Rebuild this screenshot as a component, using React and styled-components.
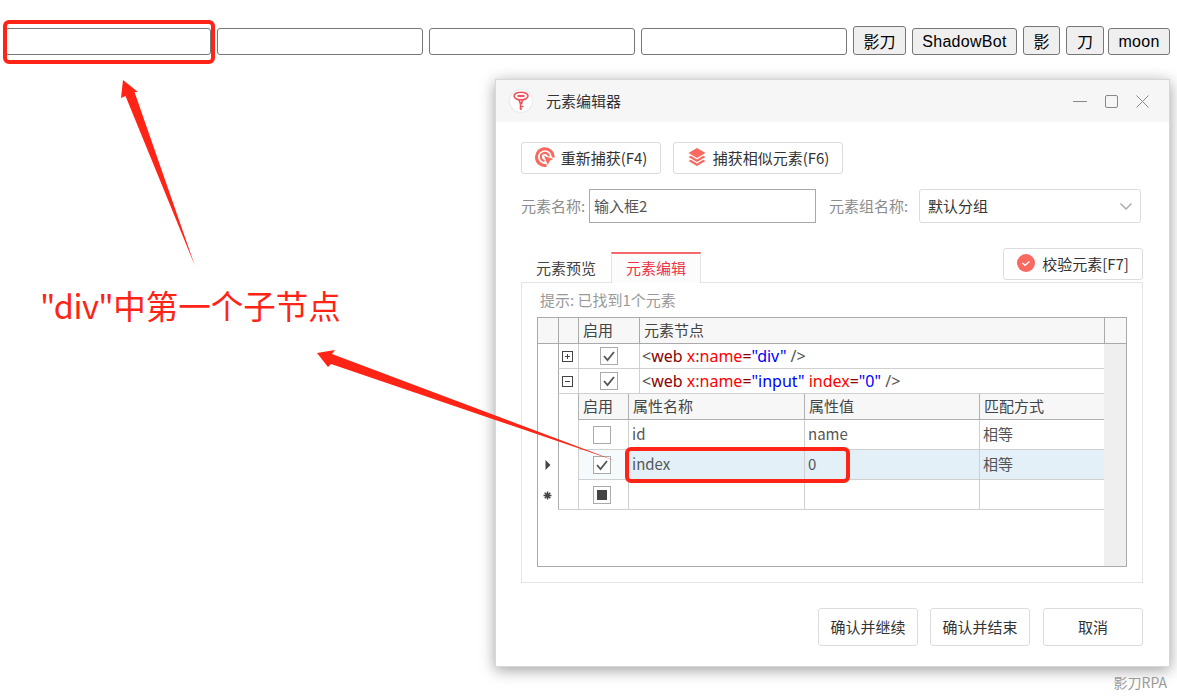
import React from 'react';
import styled, { createGlobalStyle } from 'styled-components';

const CJK = `"Noto Sans CJK SC", "Noto Sans", sans-serif`;
const RED = '#ff2416';
const CORAL = '#f8695f';

const Global = createGlobalStyle`
  * { box-sizing: border-box; }
  html, body { margin: 0; background: #fff; }
  body { font-family: ${CJK}; }
`;

const Page = styled.div`
  position: relative;
  width: 1177px;
  height: 699px;
  overflow: hidden;
`;

const Toolbar = styled.div`
  display: flex;
  align-items: flex-end;
  gap: 6px;
  height: 55px;
  padding-left: 5px;
`;

const NativeInput = styled.input`
  width: 206px;
  height: 27px;
  padding: 0;
  border: 1px solid #767676;
  border-radius: 3px;
  background: #fff;
`;

const NativeButton = styled.button`
  width: ${(p) => p.$w}px;
  height: ${(p) => (p.$tall ? 29 : 27)}px;
  padding: 0;
  margin-left: ${(p) => p.$shift || 0}px;
  border: 1px solid #767676;
  border-radius: 3px;
  background: #efefef;
  color: #000;
  font: 16px "Liberation Sans", ${CJK};
  letter-spacing: ${(p) => (p.$tall ? 0 : 0.3)}px;
`;

const Dialog = styled.div`
  position: absolute;
  left: 495px;
  top: 79px;
  width: 675px;
  height: 588px;
  display: flex;
  flex-direction: column;
  background: #fff;
  border: 1px solid #d8d8d8;
  box-shadow: 0 3px 14px rgba(0, 0, 0, 0.38);
  font-size: 15px;
  color: #333;
`;

const TitleBar = styled.div`
  display: flex;
  align-items: center;
  height: 42px;
  padding: 0 20px 0 14px;
  background: #f6f6f6;
`;

const AppBadge = styled.div`
  display: flex;
  align-items: center;
  justify-content: center;
  width: 22px;
  height: 22px;
  border-radius: 50%;
  background: #fff;
  box-shadow: 0 0 2px rgba(0, 0, 0, 0.15);
`;

const Title = styled.div`
  margin-left: 14px;
  padding-bottom: 2px;
  flex: 1;
  color: #333;
`;

const WindowControls = styled.div`
  display: flex;
  align-items: center;
  gap: 18px;
`;

const Body = styled.div`
  display: flex;
  flex-direction: column;
  padding: 20px 26px 20px 25px;
  flex: 1;
`;

const Actions = styled.div`
  display: flex;
  gap: 12px;
`;

const OutlineButton = styled.button`
  display: flex;
  align-items: center;
  justify-content: center;
  gap: 6px;
  width: ${(p) => p.$w}px;
  height: ${(p) => p.$h || 32}px;
  padding: 0 0 2px;
  border: 1px solid #dcdcdc;
  border-radius: 3px;
  background: #fff;
  color: #333;
  font: 15px ${CJK};
`;

const VerifyButton = styled(OutlineButton)`
  align-self: flex-start;
  gap: 7px;
`;

const CancelButton = styled(OutlineButton)`
  margin-left: 1px;
`;

const FormRow = styled.div`
  display: flex;
  align-items: center;
  margin-top: 15px;
`;

const FieldLabel = styled.span`
  width: ${(p) => p.$w}px;
  margin-left: ${(p) => p.$gap || 0}px;
  padding-bottom: 2px;
  color: #8c8c8c;
  white-space: nowrap;
`;

const NameField = styled.div`
  display: flex;
  align-items: center;
  width: 227px;
  height: 34px;
  padding: 0 0 2px 4px;
  border: 1px solid #a9a9a9;
  color: #555;
`;

const SelectField = styled.div`
  display: flex;
  align-items: center;
  justify-content: space-between;
  width: 222px;
  height: 34px;
  padding: 0 7px 2px 8px;
  border: 1px solid #dcdcdc;
  border-radius: 3px;
  color: #333;
  svg { transform: translateY(1px); }
`;

const TabRow = styled.div`
  display: flex;
  align-items: flex-end;
  justify-content: space-between;
  height: 34px;
  margin-top: 25px;
`;

const Tabs = styled.div`
  display: flex;
  margin-bottom: -1px;
  position: relative;
  z-index: 1;
`;

const Tab = styled.div`
  display: flex;
  align-items: center;
  justify-content: center;
  width: 90px;
  height: 31px;
  padding-bottom: 2px;
  color: ${(p) => (p.$active ? '#ee3344' : '#444')};
  background: ${(p) => (p.$active ? '#fcfcfc' : 'transparent')};
  border: 1px solid ${(p) => (p.$active ? '#e2e2e2' : 'transparent')};
  border-bottom: none;
  border-top: 2px solid ${(p) => (p.$active ? '#f4696b' : 'transparent')};
`;

const Panel = styled.div`
  height: 301px;
  padding: 0 15px;
  border: 1px solid #e4e4e4;
`;

const Hint = styled.div`
  height: 34px;
  padding: 5px 0 0 3px;
  font-size: 15px;
  line-height: 24px;
  color: #999;
`;

const Grid = styled.div`
  width: 590px;
  height: 250px;
  display: flex;
  flex-direction: column;
  border: 1px solid #aaa;
  color: #555;
`;

const GridHead = styled.div`
  display: grid;
  grid-template-columns: 20px 20px 61px 465px 1fr;
  height: 26px;
  flex: none;
  background: #f7f7f7;
  border-bottom: 1px solid #aaa;
`;

const HeadCell = styled.div`
  display: flex;
  align-items: center;
  padding: 0 0 2px 4px;
  color: #444;
  font-size: 15px;
  border-left: ${(p) => (p.$first ? 'none' : '1px solid #aaa')};
`;

const GridBody = styled.div`
  display: flex;
  flex: 1;
`;

const Rows = styled.div`
  width: 566px;
`;

const ScrollTrack = styled.div`
  flex: 1;
  background: #efefef;
`;

const NodeRow = styled.div`
  display: grid;
  grid-template-columns: 20px 20px 61px 1fr;
  height: 25px;
`;

const NodeCell = styled.div`
  display: flex;
  align-items: center;
  justify-content: ${(p) => (p.$center ? 'center' : 'flex-start')};
  padding-left: ${(p) => p.$pad || 0}px;
  padding-right: ${(p) => (p.$line ? 3 : 0)}px;
  border-bottom: 1px solid #d0d0d0;
  border-left: 1px solid ${(p) => p.$line || '#d0d0d0'};
  white-space: nowrap;
`;

const Gutter = styled.div``;

const Xml = styled.span`
  font-family: "Noto Sans", ${CJK};
  font-size: 16px;
  color: #555;
`;

const Tok = styled.span`
  color: ${(p) => p.$c};
`;

const Detail = styled.div`
  display: flex;
`;

const Marks = styled.div`
  width: 20px;
  padding-top: 26px;
`;

const Mark = styled.div`
  display: flex;
  align-items: center;
  justify-content: center;
  height: 30px;
  padding-right: 1px;
`;

const Indent = styled.div`
  width: 20px;
  border-left: 1px solid #b0b0b0;
  border-bottom: 1px solid #d0d0d0;
`;

const SubTable = styled.div`
  flex: 1;
`;

const SubRow = styled.div`
  display: grid;
  grid-template-columns: 50px 176px 175px 1fr;
  height: ${(p) => (p.$head ? 26 : 30)}px;
`;

const SubCell = styled.div`
  display: flex;
  align-items: center;
  justify-content: ${(p) => (p.$center ? 'center' : 'flex-start')};
  padding-left: ${(p) => (p.$center ? 0 : p.$head ? 4 : 3)}px;
  padding-right: ${(p) => (p.$center ? 3 : 0)}px;
  padding-bottom: ${(p) => (p.$center ? 0 : 2)}px;
  font-size: 15px;
  color: ${(p) => (p.$head ? '#444' : '#555')};
  background: ${(p) => (p.$head ? '#f7f7f7' : p.$bg || '#fff')};
  border-left: 1px solid ${(p) => (p.$head ? '#b0b0b0' : '#d0d0d0')};
  border-bottom: 1px solid ${(p) => (p.$head ? '#b0b0b0' : '#d0d0d0')};
`;

const Check = styled.div`
  display: flex;
  align-items: center;
  justify-content: center;
  width: 18px;
  height: 18px;
  background: #fff;
  border: 1px solid #aaa;
`;

const FilledSquare = styled.div`
  width: 10px;
  height: 10px;
  background: #444;
`;

const Footer = styled.div`
  display: flex;
  justify-content: flex-end;
  gap: 12px;
  margin-top: 25px;
`;

const Overlay = styled.svg`
  position: absolute;
  left: 0;
  top: 0;
  pointer-events: none;
`;

const Callout = styled.div`
  position: absolute;
  left: 40px;
  top: 283px;
  font-size: 32.5px;
  line-height: 44px;
  color: ${RED};
  white-space: nowrap;
`;

const CalloutLatin = styled.span`
  letter-spacing: -0.5px;
`;

const Watermark = styled.div`
  position: absolute;
  right: 10px;
  top: 673px;
  font-size: 14px;
  line-height: 18px;
  color: #9a9a9a;
`;

const AppIcon = () => (
  <svg width="18" height="20" viewBox="0 0 18 20" fill="none" stroke="#f4505a" strokeWidth="1.6">
    <ellipse cx="9" cy="5" rx="7" ry="3.8" />
    <path d="M5.5 5h7" strokeWidth="2.2" />
    <path d="M7 8.5l1.5 4.5v5h1.5M10.5 8.5L9.5 13M9 15.500h2.500" />
  </svg>
);

const WinIcons = () => (
  <WindowControls>
    <svg width="14" height="14" viewBox="0 0 14 14" stroke="#888" fill="none"><path d="M0 7.500h14" /></svg>
    <svg width="13" height="13" viewBox="0 0 13 13" stroke="#888" fill="none"><rect x="0.5" y="0.500" width="12" height="12" rx="1.500" /></svg>
    <svg width="13" height="13" viewBox="0 0 13 13" stroke="#888" fill="none"><path d="M0.500 0.500l12 12M12.500 0.500l-12 12" /></svg>
  </WindowControls>
);

const RecaptureIcon = () => (
  <svg width="20" height="20" viewBox="0 0 20 20" fill="none" stroke={CORAL}>
    <path d="M11.500 18.300A8.400 8.400 0 1 1 18.300 10.500" strokeWidth="3" />
    <path d="M9.500 13.800A4 4 0 1 1 13.800 9.500" strokeWidth="2.200" />
    <path d="M8.300 8.300l11 3.600-4.300 2.200-2.200 4.900z" fill={CORAL} stroke="#fff" strokeWidth="0.800" />
  </svg>
);

const LayersIcon = () => (
  <svg width="20" height="20" viewBox="0 0 20 20" fill={CORAL}>
    <path d="M10 1l8.500 5L10 11 1.500 6z" />
    <path d="M3.800 8.800L1.500 10.100 10 15l8.500-4.900-2.300-1.300L10 12.400z" />
    <path d="M3.800 12.800L1.500 14.100 10 19l8.500-4.900-2.300-1.300L10 16.400z" />
  </svg>
);

const VerifyIcon = () => (
  <svg width="18" height="18" viewBox="0 0 18 18" fill="none">
    <circle cx="9" cy="9" r="9" fill={CORAL} />
    <path d="M5.500 9l2.500 2.300 4.500-3.800" stroke="#fff" strokeWidth="1.400" />
  </svg>
);

const Chevron = () => (
  <svg width="14" height="14" viewBox="0 0 14 14" fill="none" stroke="#aaa" strokeWidth="1.500"><path d="M1.500 4.500L7 10l5.500-5.500" /></svg>
);

const Tick = () => (
  <svg width="14" height="14" viewBox="0 0 14 14" fill="none" stroke="#555" strokeWidth="1.800"><path d="M2 7l3.500 4L12 3" /></svg>
);

const Expander = ({ open }) => (
  <svg width="11" height="11" viewBox="0 0 11 11" fill="none" stroke="#444">
    <rect x="0.500" y="0.500" width="10" height="10" />
    <path d={open ? 'M3 5.500h5' : 'M3 5.500h5M5.500 3v5'} />
  </svg>
);

const RowArrow = () => (
  <svg width="6" height="10" viewBox="0 0 6 10" fill="#444"><path d="M0.500 0l5 5-5 5z" /></svg>
);

const NewRowStar = () => (
  <svg width="9" height="9" viewBox="0 0 9 9" stroke="#444" strokeWidth="1.500"><path d="M4.500 0.500v8M0.500 4.500h8M1.700 1.700l5.600 5.600M7.300 1.700l-5.600 5.600" /></svg>
);

const attrRows = [
  { state: 'off', name: 'id', value: 'name', match: '相等' },
  { state: 'on', name: 'index', value: '0', match: '相等', selected: true },
  { state: 'new', name: '', value: '', match: '' },
];

const NodeXml = ({ tag, index }) => (
  <Xml>
    &lt;<Tok $c="#8b0000">web </Tok><Tok $c="#f00">x</Tok>:<Tok $c="#f00">name</Tok><Tok $c="#8b0000">=</Tok>
    <Tok $c="#00f">"{tag}"</Tok>
    {index !== undefined && (
      <>
        {' '}<Tok $c="#f00">index</Tok><Tok $c="#8b0000">=</Tok><Tok $c="#00f">"{index}"</Tok>
      </>
    )}
    {' '}/&gt;
  </Xml>
);

const Annotations = () => (
  <Overlay width="1177" height="699" viewBox="0 0 1177 699">
    <rect x="5" y="22" width="208" height="40" rx="4" fill="none" stroke={RED} strokeWidth="4" />
    <rect x="627" y="449" width="221" height="32" rx="4" fill="none" stroke={RED} strokeWidth="4" />
    <path d="M123 80L138 92 134.500 92 195 266 125.500 96 121 98z" fill={RED} />
    <path d="M317 353L335 350 332 354 616 461 331 364 328 367z" fill={RED} />
  </Overlay>
);

export default function App() {
  return (
    <Page>
      <Global />
      <Toolbar>
        <NativeInput />
        <NativeInput />
        <NativeInput />
        <NativeInput />
        <NativeButton $tall $w={53}>影刀</NativeButton>
        <NativeButton $w={105}>ShadowBot</NativeButton>
        <NativeButton $tall $w={37}>影</NativeButton>
        <NativeButton $tall $w={38}>刀</NativeButton>
        <NativeButton $shift={-2} $w={62}>moon</NativeButton>
      </Toolbar>

      <Dialog>
        <TitleBar>
          <AppBadge><AppIcon /></AppBadge>
          <Title>元素编辑器</Title>
          <WinIcons />
        </TitleBar>
        <Body>
          <Actions>
            <OutlineButton $w={140}><RecaptureIcon />重新捕获(F4)</OutlineButton>
            <OutlineButton $w={170}><LayersIcon />捕获相似元素(F6)</OutlineButton>
          </Actions>

          <FormRow>
            <FieldLabel $w={68}>元素名称:</FieldLabel>
            <NameField>输入框2</NameField>
            <FieldLabel $w={90} $gap={13}>元素组名称:</FieldLabel>
            <SelectField>默认分组<Chevron /></SelectField>
          </FormRow>

          <TabRow>
            <Tabs>
              <Tab>元素预览</Tab>
              <Tab $active>元素编辑</Tab>
            </Tabs>
            <VerifyButton $w={140}><VerifyIcon />校验元素[F7]</VerifyButton>
          </TabRow>

          <Panel>
            <Hint>提示: 已找到1个元素</Hint>
            <Grid>
              <GridHead>
                <HeadCell $first />
                <HeadCell />
                <HeadCell>启用</HeadCell>
                <HeadCell>元素节点</HeadCell>
                <HeadCell />
              </GridHead>
              <GridBody>
                <Rows>
                  <NodeRow>
                    <Gutter />
                    <NodeCell $center $line="#aaa"><Expander /></NodeCell>
                    <NodeCell $center><Check><Tick /></Check></NodeCell>
                    <NodeCell $pad={2}><NodeXml tag="div" /></NodeCell>
                  </NodeRow>
                  <NodeRow>
                    <Gutter />
                    <NodeCell $center $line="#aaa"><Expander open /></NodeCell>
                    <NodeCell $center><Check><Tick /></Check></NodeCell>
                    <NodeCell $pad={2}><NodeXml tag="input" index="0" /></NodeCell>
                  </NodeRow>
                  <Detail>
                    <Marks>
                      <Mark />
                      <Mark><RowArrow /></Mark>
                      <Mark><NewRowStar /></Mark>
                    </Marks>
                    <Indent />
                    <SubTable>
                      <SubRow $head>
                        <SubCell $head>启用</SubCell>
                        <SubCell $head>属性名称</SubCell>
                        <SubCell $head>属性值</SubCell>
                        <SubCell $head>匹配方式</SubCell>
                      </SubRow>
                      {attrRows.map((row, i) => {
                        const bg = row.selected ? '#e3f0f8' : '#fff';
                        return (
                          <SubRow key={i}>
                            <SubCell $center $bg={row.selected ? '#f5fafd' : '#fff'}>
                              <Check>
                                {row.state === 'on' && <Tick />}
                                {row.state === 'new' && <FilledSquare />}
                              </Check>
                            </SubCell>
                            <SubCell $bg={bg}>{row.name}</SubCell>
                            <SubCell $bg={bg}>{row.value}</SubCell>
                            <SubCell $bg={bg}>{row.match}</SubCell>
                          </SubRow>
                        );
                      })}
                    </SubTable>
                  </Detail>
                </Rows>
                <ScrollTrack />
              </GridBody>
            </Grid>
          </Panel>

          <Footer>
            <OutlineButton $w={100} $h={38}>确认并继续</OutlineButton>
            <OutlineButton $w={100} $h={38}>确认并结束</OutlineButton>
            <CancelButton $w={100} $h={38}>取消</CancelButton>
          </Footer>
        </Body>
      </Dialog>

      <Annotations />
      <Callout><CalloutLatin>"div"</CalloutLatin>中第一个子节点</Callout>
      <Watermark>影刀RPA</Watermark>
    </Page>
  );
}
